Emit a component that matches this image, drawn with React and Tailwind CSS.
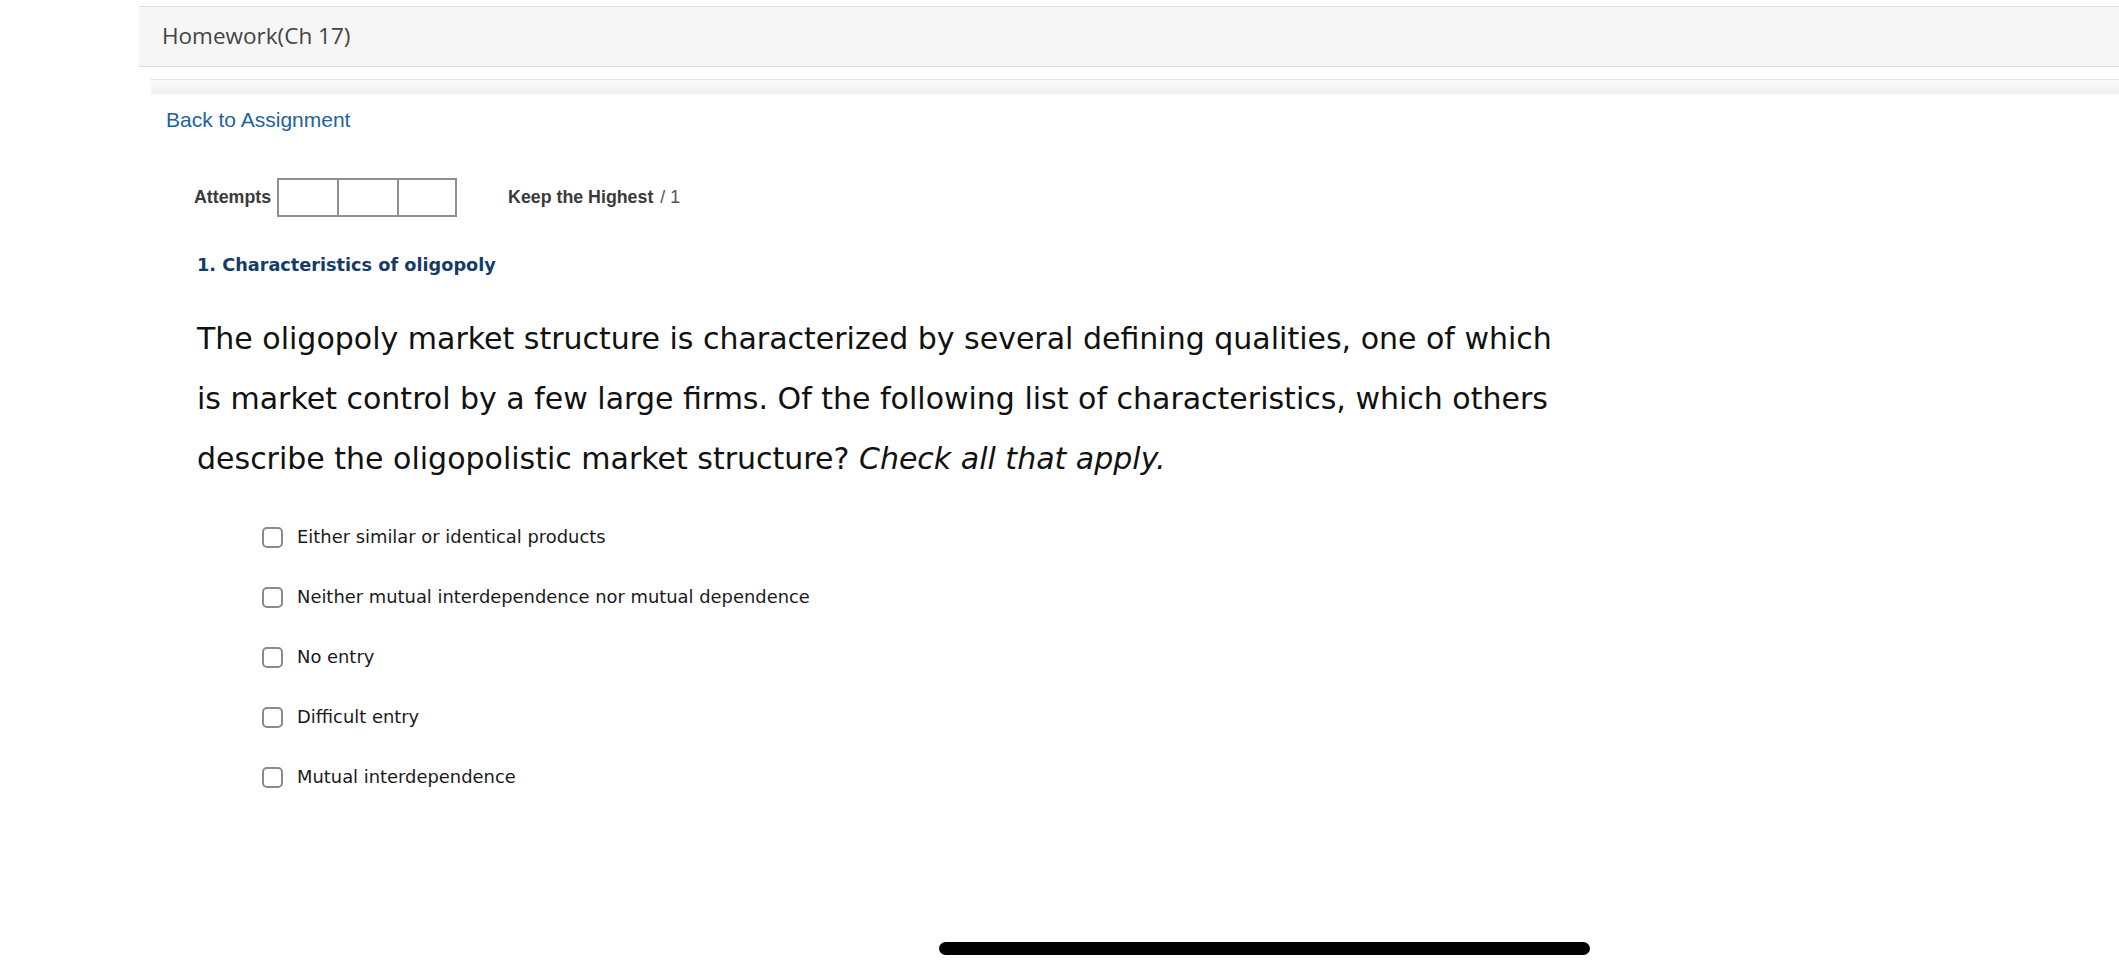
import React from 'react'

const choices = [
  'Either similar or identical products',
  'Neither mutual interdependence nor mutual dependence',
  'No entry',
  'Difficult entry',
  'Mutual interdependence',
]

export default function App() {
  return (
    <div className="relative min-h-[978px] w-full overflow-hidden bg-white">
      {/* page header */}
      <div className="ml-[139px] mt-[6px] flex h-[61px] items-center border-y border-[#dcdcdc] bg-[#f6f6f6] pl-[23px]">
        <h1 className="text-[22.5px] leading-none text-[#444] [font-family:'Open_Sans',sans-serif]">
          Homework(Ch 17)
        </h1>
      </div>

      <div className="ml-[151px] mt-[12px] h-[15px] border-t border-[#e3e3e3] bg-gradient-to-b from-[#fbfbfb] to-[#eeeff0]" />

      <div className="ml-[166px]">
        <a href="#" className="mt-[14px] block text-[21px] leading-[24px] text-[#23639c] [font-family:'Liberation_Sans',Arial,sans-serif]">
          Back to Assignment
        </a>

        {/* attempts row */}
        <div className="ml-[28px] mt-[46px] flex items-center [font-family:'Liberation_Sans',Arial,sans-serif] text-[17.8px] text-[#3a3a3a]">
          <span className="font-bold">Attempts</span>
          <div className="ml-[6px] flex h-[39px] border-2 border-[#8f8f8f]">
            <div className="w-[58px]" />
            <div className="w-[60px] border-l-2 border-[#8f8f8f]" />
            <div className="w-[58px] border-l-2 border-[#8f8f8f]" />
          </div>
          <span className="ml-[51px] font-bold">Keep the Highest</span>
          <span className="ml-[7px] text-[#555]">/ 1</span>
        </div>

        <div className="ml-[31px] mt-[36px] [font-family:'DejaVu_Sans',Verdana,sans-serif]">
          <h2 className="text-[17.7px] font-bold leading-[24px] text-[#153c68]">
            1. Characteristics of oligopoly
          </h2>

          <p className="mt-[32px] whitespace-nowrap text-[30px] leading-[60px] text-[#111]">
            The oligopoly market structure is characterized by several defining qualities, one of which
            <br />
            is market control by a few large firms. Of the following list of characteristics, which others
            <br />
            describe the oligopolistic market structure? <em>Check all that apply.</em>
          </p>

          <ul className="ml-[65px] mt-[18px]">
            {choices.map((choice) => (
              <li key={choice} className="flex h-[60px] items-center">
                <span className="h-[21px] w-[21px] shrink-0 rounded-[5px] border-2 border-[#8a8a8a] bg-white" />
                <span className="ml-[14px] text-[17.9px] text-[#1a1a1a]">{choice}</span>
              </li>
            ))}
          </ul>
        </div>
      </div>

      {/* home indicator */}
      <div className="absolute left-[939px] top-[942px] h-[13px] w-[651px] rounded-full bg-black" />
    </div>
  )
}
